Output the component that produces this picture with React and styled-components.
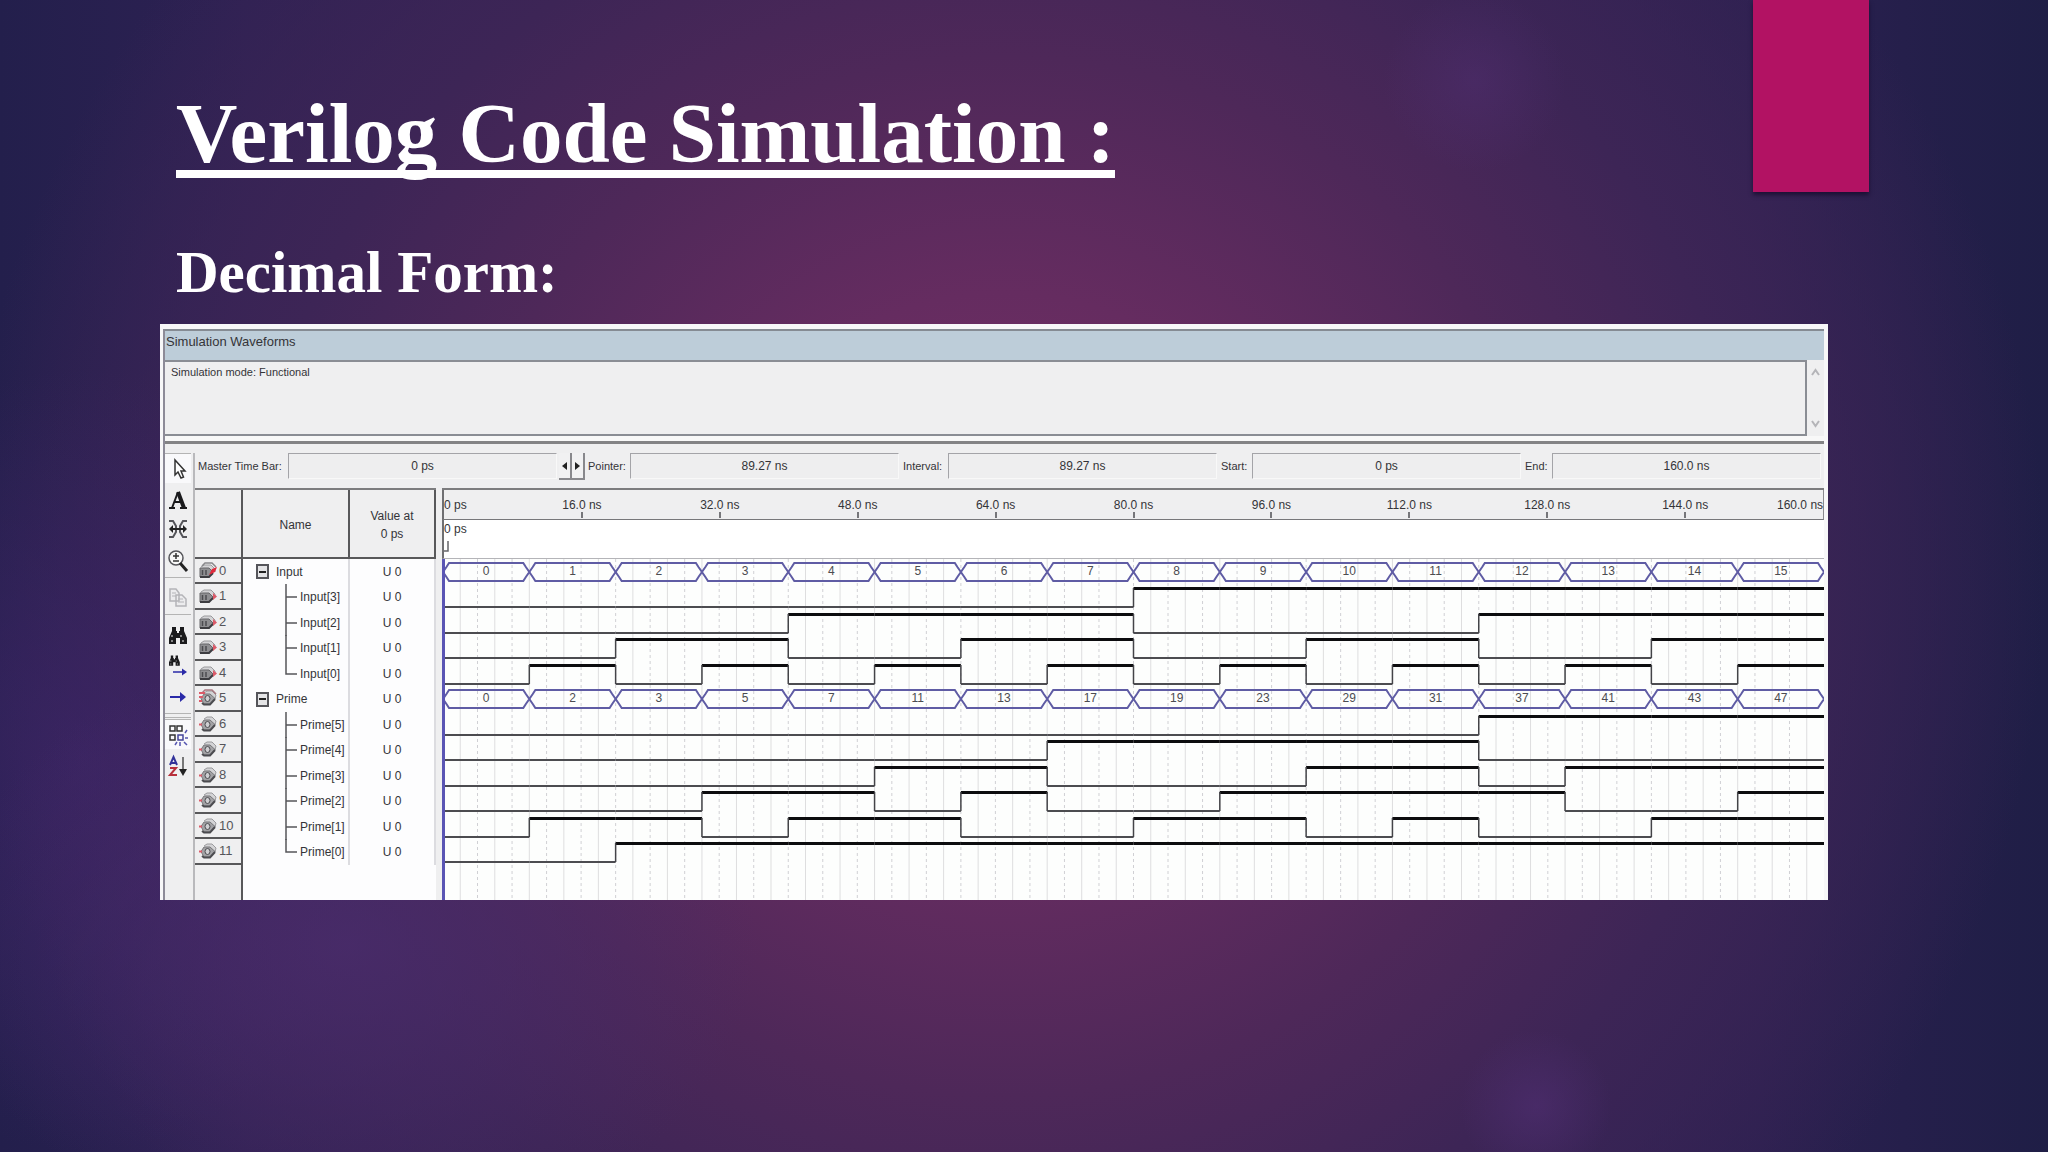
import React from 'react'
import styled, { createGlobalStyle } from 'styled-components'

const GlobalStyle = createGlobalStyle`
    * {
        box-sizing: border-box;
    }
    body {
        margin: 0;
        background-color: #2b2050;
    }
`
const Slide = styled.main`
    position: relative;
    min-height: 100vh;
    padding: 85px 220px 0 160px;
    background:
        radial-gradient(circle at 72% 7%, rgba(84, 48, 118, 0.4), transparent 5%),
        radial-gradient(circle at 75% 96%, rgba(84, 48, 120, 0.5), transparent 4%),
        radial-gradient(ellipse 20% 26% at 17% 82%, rgba(74, 44, 108, 0.8), transparent),
        radial-gradient(ellipse 16% 34% at 4% 66%, rgba(66, 38, 108, 0.6), transparent),
        radial-gradient(ellipse 48% 82% at 49% 50%, #783067 0%, #652c60 30%, #4e2859 55%, #3d2556 76%, rgba(46, 33, 80, 0) 106%),
        linear-gradient(90deg, #231f4c 0%, #2e2153 12%, #35235a 50%, #2b2050 86%, #1f1e46 100%);
`
const Ribbon = styled.div`
    position: absolute;
    top: 0;
    right: 179px;
    width: 116px;
    height: 192px;
    background-color: #b21263;
    box-shadow: 0 3px 4px rgba(20, 8, 40, 0.7);
`
const Title = styled.h1`
    margin: 0 16px;
    font-family: "Liberation Serif", serif;
    font-size: 85px;
    font-weight: 700;
    line-height: 96px;
    color: white;
    text-decoration: underline;
    text-decoration-thickness: 8px;
    text-underline-offset: 8px;
    text-decoration-skip-ink: none;
`
const Subtitle = styled.h2`
    margin: 58px 16px 19px;
    font-family: "Liberation Serif", serif;
    font-size: 59px;
    font-weight: 700;
    line-height: 66px;
    color: white;
`
const Window = styled.section`
    padding: 5px 4px 0 3px;
    background-color: #f7f7f8;
    font-family: "Liberation Sans", sans-serif;
    font-size: 12px;
    line-height: 18px;
    color: #343438;
`
const Frame = styled.div`
    border-top: 2px solid #858b93;
    border-left: 2px solid #8d8b98;
    background-color: #efeff0;
`
const TitleBar = styled.div`
    height: 29px;
    padding: 2px 1px;
    background-color: #bdcdd9;
    font-size: 13px;
`
const ModeRow = styled.div`
    display: flex;
    height: 76px;
`
const ModeText = styled.div`
    flex: 1;
    padding: 1px 6px;
    border: 2px solid #8a8d94;
    border-left: none;
    font-size: 11px;
`
const ScrollBar = styled.div`
    width: 17px;
    display: flex;
    flex-direction: column;
    justify-content: space-between;
    align-items: center;
    padding: 4px 0;
`
const ScrollButton = styled.button`
    width: 17px;
    height: 17px;
    padding: 0;
    border: none;
    background: none;
    color: #b4b4b8;
`
const Splitter = styled.div`
    height: 8px;
    border-bottom: 3px solid #838385;
    background-color: #f8f8f8;
`
const Workspace = styled.div`
    display: flex;
    padding-top: 9px;
`
const Toolbar = styled.div`
    width: 30px;
    flex: none;
    display: flex;
    flex-direction: column;
    gap: 1px;
    border-right: 2px solid #b9b9bc;
`
const ToolButton = styled.button`
    width: 26px;
    height: 30px;
    padding: 0;
    display: flex;
    align-items: center;
    justify-content: center;
    border: none;
    border-top: 1px solid ${props => props.$active ? '#b4b4b4' : 'transparent'};
    background-color: ${props => props.$active ? '#f9f9fb' : 'transparent'};
`
const ToolLine = styled.div`
    width: 26px;
    height: 5px;
    border-top: 1px solid #b4b4b4;
    border-bottom: ${props => props.$double ? '1px solid #b4b4b4' : 'none'};
`
const Main = styled.div`
    flex: 1;
    min-width: 0;
`
const TimeBar = styled.div`
    display: flex;
    height: 35px;
    align-items: flex-start;
    padding: 0 3px;
`
const TimeLabel = styled.label`
    width: ${props => props.$width}px;
    flex: none;
    font-size: 11px;
    line-height: 26px;
    white-space: nowrap;
`
const TimeField = styled.input`
    flex: 1;
    min-width: 0;
    height: 26px;
    margin-right: 4px;
    padding: 0;
    border: 1px solid #a4a4a8;
    border-right-color: #f8f8f8;
    border-bottom-color: #f8f8f8;
    background-color: #eeeeef;
    font: inherit;
    color: inherit;
    text-align: center;
    &:last-child {
        margin-right: 0;
    }
`
const Spin = styled.div`
    display: flex;
    margin-left: -2px;
    margin-right: 3px;
`
const SpinButton = styled.button`
    width: 13px;
    height: 27px;
    padding: 0;
    border: none;
    border-right: 2px solid #88888c;
    border-bottom: 2px solid #88888c;
    background-color: #f1f1f2;
`
const Panels = styled.div`
    display: flex;
`
const Signals = styled.table`
    width: 241px;
    flex: none;
    table-layout: fixed;
    border-collapse: separate;
    border-spacing: 0;
    border-top: 2px solid #7c7c7e;
    background-color: #fdfdfe;
`
const HeadCell = styled.th`
    width: ${props => props.$width}px;
    height: 69px;
    padding: 2px 0 0;
    border-right: 2px solid #58585a;
    border-bottom: 2px solid #58585a;
    background-color: #efeff0;
    font-weight: 400;
`
const SignalRow = styled.tr`
    height: 25px;
    &:nth-child(even) {
        height: 26px;
    }
`
const IndexCell = styled.td`
    padding: 0 0 0 4px;
    border-right: 2px solid #58585a;
    border-bottom: 2px solid #58585a;
    background-color: #efeff0;
`
const IndexBox = styled.div`
    display: flex;
    align-items: center;
    gap: 2px;
    font-size: 13px;
    color: #55555a;
`
const NameCell = styled.td`
    padding: 0;
    border-right: 2px solid #dcdce0;
`
const NameBox = styled.div`
    display: flex;
    align-items: center;
    height: 25px;
    gap: ${props => props.$child ? 3 : 7}px;
    padding-left: ${props => props.$child ? 42 : 13}px;
`
const ToggleButton = styled.button`
    width: 13px;
    height: 15px;
    padding: 0;
    border: 2px solid #55555a;
    background-color: #e4e4e6;
    display: flex;
    align-items: center;
    justify-content: center;
`
const ValueCell = styled.td`
    padding: 0;
    border-right: 2px solid #dcdce0;
    text-align: center;
`
const FillerRow = styled.tr`
    height: 35px;
`
const FillerCell = styled.td`
    padding: 0;
    border-right: 2px solid #58585a;
    background-color: #efeff0;
`
const Waves = styled.div`
    flex: 1;
    min-width: 0;
    margin-left: 6px;
    border-top: 2px solid #7c7c7e;
    background-color: #fdfefd;
`
const Ruler = styled.div`
    display: flex;
    height: 30px;
    border-left: 2px solid #6f6f72;
    border-right: 1px solid #8a8a8e;
    border-bottom: 1px solid #77777a;
    background-color: #efeff0;
`
const RulerMark = styled.div`
    flex: ${props => props.$half ? 1 : 2} 1 0;
    min-width: 0;
    display: flex;
    flex-direction: column;
    align-items: ${props => props.$align || 'center'};
    white-space: nowrap;
    line-height: 30px;
    &::after {
        content: '';
        width: ${props => props.$half ? 0 : 2}px;
        height: 6px;
        flex: none;
        margin-top: -8px;
        background-color: #77777a;
    }
`
const Cursor = styled.div`
    height: 39px;
    border-left: 2px solid #6f6f72;
    border-bottom: 1px solid #b4b4b8;
    display: flex;
    flex-direction: column;
    background-color: white;
`
const Plot = styled.div`
    position: relative;
    height: 341px;
    border-left: 1px solid #5a55b4;
    &::after {
        content: '';
        position: absolute;
        top: 0;
        bottom: 0;
        left: -1px;
        width: 3px;
        background-color: #5a55b4;
    }
`
const PlotGrid = styled.svg`
    position: absolute;
    inset: 0;
    width: 100%;
    height: 100%;
`
const Track = styled.div`
    position: relative;
    height: 25px;
    &:nth-of-type(even) {
        height: 26px;
    }
`
const TrackLine = styled.svg`
    position: absolute;
    left: 0;
    top: 0;
    width: 100%;
    height: 25px;
`
const BusValues = styled.div`
    position: relative;
    display: grid;
    grid-template-columns: repeat(16, 1fr);
    line-height: 25px;
    text-align: center;
    color: #4c4c50;
`

const inputs = [0, 1, 2, 3, 4, 5, 6, 7, 8, 9, 10, 11, 12, 13, 14, 15]
const primes = [0, 2, 3, 5, 7, 11, 13, 17, 19, 23, 29, 31, 37, 41, 43, 47]

const signals = [
    { name: 'Input', values: inputs, kind: 'in', bus: true },
    { name: 'Input[3]', values: inputs, bit: 3, kind: 'in' },
    { name: 'Input[2]', values: inputs, bit: 2, kind: 'in' },
    { name: 'Input[1]', values: inputs, bit: 1, kind: 'in' },
    { name: 'Input[0]', values: inputs, bit: 0, kind: 'in', last: true },
    { name: 'Prime', values: primes, kind: 'out', bus: true },
    { name: 'Prime[5]', values: primes, bit: 5, kind: 'out' },
    { name: 'Prime[4]', values: primes, bit: 4, kind: 'out' },
    { name: 'Prime[3]', values: primes, bit: 3, kind: 'out' },
    { name: 'Prime[2]', values: primes, bit: 2, kind: 'out' },
    { name: 'Prime[1]', values: primes, bit: 1, kind: 'out' },
    { name: 'Prime[0]', values: primes, bit: 0, kind: 'out', last: true },
]

const marks = ['16.0 ns', '32.0 ns', '48.0 ns', '64.0 ns', '80.0 ns', '96.0 ns', '112.0 ns', '128.0 ns', '144.0 ns']

const PinIcon = ({ kind, bus }) => (
    <svg width="18" height="18" viewBox="0 0 18 18">
        {kind === 'in' ? (
            <>
                <path d="M2 5 L5 3 H12 L16 7 V10" fill="#d4d4d6" stroke="#9a9a9d" />
                {bus && <path d="M3 4 L6 1 H13 L17 5" fill="none" stroke="#88888b" strokeWidth="1.5" />}
                <path d="M1 6 H10 L14 10 L10 15 H1 Z" fill="#8e8e91" stroke="#66666a" />
                <path d="M1 15 H10 L14 11" fill="none" stroke="#3c3c40" strokeWidth="2" />
                <path d="M3.5 8 V13 M7 8 V13" stroke="#4c4c50" strokeWidth="1.5" />
                {bus
                    ? <path d="M10 13 L13 7 L18 5 L16 10 Z" fill="#e02a3c" />
                    : <path d="M14 6 L18 9.5 L14 13 Z" fill="#dc5a68" />}
            </>
        ) : (
            <>
                <path d="M5 4 L8 2 H13 L17 6 L16 10" fill="#d4d4d6" stroke="#9a9a9d" />
                {bus && <path d="M3 4 L6 1 H13 L17 5" fill="none" stroke="#a87880" strokeWidth="1.5" />}
                <path d="M5 5 H11 L16 9.5 L11 15 H5 L2 9.5 Z" fill="#a2a2a5" stroke="#77777a" />
                <path d="M3 14 L5 15.5 H11 L16 10" fill="none" stroke="#4c4c50" strokeWidth="2" />
                <ellipse cx="8.5" cy="9.5" rx="2.5" ry="3" fill="#cfcfd2" stroke="#4c4c50" />
                <path d={bus ? 'M0 4 H6 M0 8 H4 M0 12 H3' : 'M0 9.5 H3'} fill="none" stroke="#dc5a68" strokeWidth="2" />
            </>
        )}
    </svg>
)

const Binoculars = ({ small }) => (
    <svg width="22" height="24" viewBox="0 0 22 24">
        <g transform={small ? 'translate(2 0) scale(.6 .6)' : 'translate(2 2)'} fill="#1a1a1c">
            <path d="M3 1 H7 V5 H8 V7 H10 V5 H11 V1 H15 V5 L18 12 V18 H11 V12 H7 V18 H0 V12 L3 5 Z" />
            <path d="M3 9 V11 M12 9 V11 M3 14 V16 M14 14 V16" stroke="#f0f0f0" />
        </g>
        {small && (
            <>
                <path d="M6 17 H16" stroke="#2a2aa8" strokeWidth="1.5" />
                <path d="M15 13.5 L20 17 L15 20.5 Z" fill="#2a2aa8" />
            </>
        )}
    </svg>
)

const tools = [
    {
        label: 'Select', active: true, icon: (
            <svg width="22" height="24" viewBox="0 0 22 24">
                <path d="M8 3 V18 L11 15 L14 21 L16.5 20 L14 14 H18 Z" fill="#fff" stroke="#333" strokeWidth="1.5" />
            </svg>
        )
    },
    {
        label: 'Text', icon: (
            <svg width="22" height="24" viewBox="0 0 22 24">
                <path d="M5 20 L11 4 M7 14 H15" fill="none" stroke="#1a1a1c" strokeWidth="2" />
                <path d="M11 4 L17 20" fill="none" stroke="#1a1a1c" strokeWidth="4" />
                <path d="M2 20 H8 M13 20 H20" fill="none" stroke="#1a1a1c" strokeWidth="2" />
            </svg>
        )
    },
    {
        label: 'Waveform edit', icon: (
            <svg width="22" height="24" viewBox="0 2 22 24">
                <path d="M2 4 H6 L9 9 V15 L6 20 H2 M20 4 H16 L13 9 V15 L16 20 H20" fill="none" stroke="#55555a" strokeWidth="2" />
                <path d="M3 12 H19" stroke="#222" strokeWidth="2" />
                <path d="M2 12 L6 8 V16 Z M20 12 L16 8 V16 Z" fill="#222" />
            </svg>
        )
    },
    {
        label: 'Zoom', icon: (
            <svg width="22" height="24" viewBox="0 2 22 24">
                <circle cx="9" cy="10" r="7" fill="#f8f8f8" stroke="#55555a" strokeWidth="1.5" />
                <path d="M9 5 V11 M6 8 H12 M6 13 H12" stroke="#333" strokeWidth="1.5" />
                <path d="M13 15 L20 23" stroke="#222" strokeWidth="3" />
            </svg>
        )
    },
    { line: true },
    {
        label: 'Copy', icon: (
            <svg width="22" height="24" viewBox="0 2 22 24">
                <path d="M3 4 H9 L12 8 V16 H3 Z M9 10 H15 L19 14 V21 H9 Z" fill="#ececee" stroke="#b4b4b8" strokeWidth="1.5" />
                <path d="M5 8 H9 M5 11 H9 M11 14 H16 M11 17 H17" stroke="#b4b4b8" />
            </svg>
        )
    },
    { line: true },
    { label: 'Find', icon: <Binoculars /> },
    { label: 'Find next', icon: <Binoculars small /> },
    {
        label: 'Go to', icon: (
            <svg width="22" height="24" viewBox="0 1 22 24">
                <path d="M3 12 H16" stroke="#2a2aa8" strokeWidth="2" />
                <path d="M13 7 L19 12 L13 17 Z" fill="#2a2aa8" />
            </svg>
        )
    },
    { line: true, double: true },
    {
        label: 'Snap to grid', active: true, icon: (
            <svg width="22" height="24" viewBox="0 0 22 24">
                <path d="M3 3 H8 V8 H3 Z M10 3 H15 V8 H10 Z M3 12 H8 V17 H3 Z" fill="none" stroke="#333" strokeWidth="1.5" />
                <path d="M11 12 H16 V17 H11 Z" fill="none" stroke="#44449a" strokeWidth="1.5" />
                <path d="M18 10 L20 7 M18 15 H21 M17 19 L20 22 M13 19 V23 M10 19 L8 22" stroke="#5555b0" strokeWidth="1.5" />
            </svg>
        )
    },
    {
        label: 'Sort', icon: (
            <svg width="22" height="24" viewBox="0 0 22 24">
                <path d="M3 11 L6.5 3 L10 11 M4 9 H9" fill="none" stroke="#33339a" strokeWidth="2" />
                <path d="M3 14 H9 L3 21 H10" fill="none" stroke="#b8303c" strokeWidth="2" />
                <path d="M16 3 V17" stroke="#777" strokeWidth="2" />
                <path d="M12 15 H20 L16 22 Z" fill="#222" />
            </svg>
        )
    },
]

const Wave = ({ values, bit }) => {
    const bits = values.map(value => (value >> bit) & 1)
    return (
        <TrackLine viewBox="0 0 160 25" preserveAspectRatio="none">
            {bits.map((high, i) => (
                <g key={i} fill="none">
                    <path
                        d={`M${i * 10} ${high ? 4.5 : 23} h10`}
                        stroke={high ? '#0c0c0e' : '#4c4c50'}
                        strokeWidth={high ? 3 : 2}
                        vectorEffect="non-scaling-stroke"
                    />
                    {i > 0 && high !== bits[i - 1] && (
                        <path d={`M${i * 10} 4 V23`} stroke="#444448" strokeWidth="1.5" vectorEffect="non-scaling-stroke" />
                    )}
                </g>
            ))}
        </TrackLine>
    )
}

const Bus = ({ values }) => (
    <>
        <TrackLine viewBox="0 0 160 25" preserveAspectRatio="none">
            {values.map((value, i) => (
                <path
                    key={value}
                    d={`M${i * 10} 13 l.4 -5 l.3 -4 h8.6 l.3 4 l.4 5 l-.4 5 l-.3 4 h-8.6 l-.3 -4 Z`}
                    fill="none"
                    stroke="#5f5ca4"
                    strokeWidth="2"
                    vectorEffect="non-scaling-stroke"
                />
            ))}
        </TrackLine>
        <BusValues>
            {values.map(value => <span key={value}>{value}</span>)}
        </BusValues>
    </>
)

const App = () => {
    return (
        <Slide>
            <GlobalStyle />
            <Ribbon />
            <Title>Verilog Code Simulation :</Title>
            <Subtitle>Decimal Form:</Subtitle>
            <Window>
                <Frame>
                    <TitleBar>Simulation Waveforms</TitleBar>
                    <ModeRow>
                        <ModeText>Simulation mode: Functional</ModeText>
                        <ScrollBar>
                            <ScrollButton aria-label="Scroll up">
                                <svg width="9" height="9" viewBox="0 0 9 9">
                                    <path d="M1 7 L4.5 2 L8 7" fill="none" stroke="currentColor" strokeWidth="2" />
                                </svg>
                            </ScrollButton>
                            <ScrollButton aria-label="Scroll down">
                                <svg width="9" height="9" viewBox="0 0 9 9">
                                    <path d="M1 2 L4.5 7 L8 2" fill="none" stroke="currentColor" strokeWidth="2" />
                                </svg>
                            </ScrollButton>
                        </ScrollBar>
                    </ModeRow>
                    <Splitter />
                    <Workspace>
                        <Toolbar>
                            {tools.map((tool, i) => tool.line
                                ? <ToolLine key={i} $double={tool.double} />
                                : <ToolButton key={i} $active={tool.active} aria-label={tool.label}>{tool.icon}</ToolButton>
                            )}
                        </Toolbar>
                        <Main>
                            <TimeBar>
                                <TimeLabel $width={90} htmlFor="master">Master Time Bar:</TimeLabel>
                                <TimeField id="master" defaultValue="0 ps" />
                                <Spin>
                                    <SpinButton aria-label="Previous">
                                        <svg width="5" height="8" viewBox="0 0 5 8"><path d="M5 0 V8 L0 4 Z" fill="#222" /></svg>
                                    </SpinButton>
                                    <SpinButton aria-label="Next">
                                        <svg width="5" height="8" viewBox="0 0 5 8"><path d="M0 0 V8 L5 4 Z" fill="#222" /></svg>
                                    </SpinButton>
                                </Spin>
                                <TimeLabel $width={42} htmlFor="pointer">Pointer:</TimeLabel>
                                <TimeField id="pointer" defaultValue="89.27 ns" />
                                <TimeLabel $width={45} htmlFor="interval">Interval:</TimeLabel>
                                <TimeField id="interval" defaultValue="89.27 ns" />
                                <TimeLabel $width={31} htmlFor="start">Start:</TimeLabel>
                                <TimeField id="start" defaultValue="0 ps" />
                                <TimeLabel $width={27} htmlFor="end">End:</TimeLabel>
                                <TimeField id="end" defaultValue="160.0 ns" />
                            </TimeBar>
                            <Panels>
                                <Signals>
                                    <thead>
                                        <tr>
                                            <HeadCell $width={48} />
                                            <HeadCell $width={107}>Name</HeadCell>
                                            <HeadCell $width={86}>Value at<br />0 ps</HeadCell>
                                        </tr>
                                    </thead>
                                    <tbody>
                                        {signals.map((signal, i) => (
                                            <SignalRow key={signal.name}>
                                                <IndexCell>
                                                    <IndexBox>
                                                        <PinIcon kind={signal.kind} bus={signal.bus} />
                                                        {i}
                                                    </IndexBox>
                                                </IndexCell>
                                                <NameCell>
                                                    <NameBox $child={!signal.bus}>
                                                        {signal.bus ? (
                                                            <ToggleButton aria-label={`Collapse ${signal.name}`}>
                                                                <svg width="7" height="2"><path d="M0 1 H7" stroke="#222" strokeWidth="2" /></svg>
                                                            </ToggleButton>
                                                        ) : (
                                                            <svg width="12" height="26" viewBox="0 0 12 26">
                                                                <path d={signal.last ? 'M1 0 V13 H12' : 'M1 0 V26 M1 13 H12'} fill="none" stroke="#55555a" strokeWidth="1.5" />
                                                            </svg>
                                                        )}
                                                        {signal.name}
                                                    </NameBox>
                                                </NameCell>
                                                <ValueCell>U 0</ValueCell>
                                            </SignalRow>
                                        ))}
                                        <FillerRow>
                                            <FillerCell />
                                            <td colSpan={2} />
                                        </FillerRow>
                                    </tbody>
                                </Signals>
                                <Waves>
                                    <Ruler>
                                        <RulerMark $half $align="flex-start">0 ps</RulerMark>
                                        {marks.map(mark => <RulerMark key={mark}>{mark}</RulerMark>)}
                                        <RulerMark $half $align="flex-end">160.0 ns</RulerMark>
                                    </Ruler>
                                    <Cursor>
                                        0 ps
                                        <svg width="6" height="14" viewBox="0 0 6 14">
                                            <path d="M4 3 V13 H0" fill="none" stroke="#66666a" strokeWidth="1.5" />
                                        </svg>
                                    </Cursor>
                                    <Plot>
                                        <PlotGrid>
                                            {Array.from({ length: 79 }, (_, i) => (
                                                <line
                                                    key={i}
                                                    x1={`${(i + 1) * 1.25}%`}
                                                    x2={`${(i + 1) * 1.25}%`}
                                                    y1="0"
                                                    y2="100%"
                                                    stroke={i % 2 ? '#d0d0d4' : '#dededf'}
                                                    strokeDasharray={i % 2 ? '3 3' : 'none'}
                                                />
                                            ))}
                                        </PlotGrid>
                                        {signals.map(signal => (
                                            <Track key={signal.name}>
                                                {signal.bus
                                                    ? <Bus values={signal.values} />
                                                    : <Wave values={signal.values} bit={signal.bit} />}
                                            </Track>
                                        ))}
                                    </Plot>
                                </Waves>
                            </Panels>
                        </Main>
                    </Workspace>
                </Frame>
            </Window>
        </Slide>
    )
}
export default App
